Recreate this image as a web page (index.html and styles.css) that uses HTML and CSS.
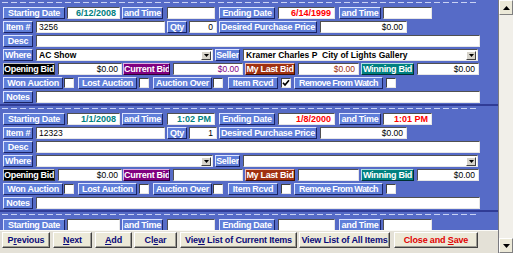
FILE: index.html
```html
<!DOCTYPE html>
<html>
<head>
<meta charset="utf-8">
<title>Auction Watch</title>
<link rel="stylesheet" href="styles.css">
</head>
<body>
<div class="window">
  <div class="main">
    <div class="records">

      <div class="record">
        <div class="dash"></div>
        <div class="rows">
          <div class="row">
            <div class="lbl w62">Starting Date</div>
            <div class="fld w53 ml2 r date teal">6/12/2008</div>
            <div class="lbl w41 ml2">and Time</div>
            <div class="fld w48 ml4 r date teal"></div>
            <div class="lbl w56 ml4">Ending Date</div>
            <div class="fld w57 ml3 r date red">6/14/1999</div>
            <div class="lbl w42 ml4">and Time</div>
            <div class="fld w49 ml2 r date red"></div>
          </div>
          <div class="row">
            <div class="lbl w30">Item #</div>
            <div class="fld w129 ml3">3256</div>
            <div class="lbl w20 ml2">Qty</div>
            <div class="fld w28 ml2 r">0</div>
            <div class="lbl w98 ml2">Desired Purchase Price</div>
            <div class="fld w87 ml3 r">$0.00</div>
          </div>
          <div class="row">
            <div class="lbl w30">Desc</div>
            <div class="fld w444 ml3"></div>
          </div>
          <div class="row">
            <div class="lbl w30">Where</div>
            <div class="fld combo w177 ml3"><span class="ctext b">AC Show</span><span class="drop"><svg width="5" height="3" viewBox="0 0 5 3"><path d="M0 0H5L2.5 3Z"/></svg></span></div>
            <div class="lbl w25 ml2">Seller</div>
            <div class="fld combo w235 ml3"><span class="ctext b"><span class="col1">Kramer Charles P</span>City of Lights Gallery</span><span class="drop"><svg width="5" height="3" viewBox="0 0 5 3"><path d="M0 0H5L2.5 3Z"/></svg></span></div>
          </div>
          <div class="row">
            <div class="lbl w52 black">Opening Bid</div>
            <div class="fld w64 ml3 r">$0.00</div>
            <div class="lbl w47 ml1 purple">Current Bid</div>
            <div class="fld w70 ml3 r t-purple">$0.00</div>
            <div class="lbl w50 ml2 brown">My Last Bid</div>
            <div class="fld w61 ml3 r t-brown">$0.00</div>
            <div class="lbl w53 ml2 teal-bg">Winning Bid</div>
            <div class="fld w62 ml3 r">$0.00</div>
          </div>
          <div class="row">
            <div class="lbl w60">Won Auction</div>
            <div class="cb ml1"></div>
            <div class="lbl w59 ml4">Lost Auction</div>
            <div class="cb ml2"></div>
            <div class="lbl w59 ml4">Auction Over</div>
            <div class="cb ml1"></div>
            <div class="lbl w50 ml5">Item Rcvd</div>
            <div class="cb ml3"><svg width="8" height="8" viewBox="0 0 8 8"><path d="M1 3.8L3 6L7 1.3" fill="none" stroke="#000" stroke-width="1.7"/></svg></div>
            <div class="lbl w89 ml3 tight">Remove From Watch</div>
            <div class="cb ml3"></div>
          </div>
          <div class="row">
            <div class="lbl w30">Notes</div>
            <div class="fld w444 ml3"></div>
          </div>
        </div>
      </div>

      <div class="record">
        <div class="dash"></div>
        <div class="rows">
          <div class="row">
            <div class="lbl w62">Starting Date</div>
            <div class="fld w53 ml2 r date teal">1/1/2008</div>
            <div class="lbl w41 ml2">and Time</div>
            <div class="fld w48 ml4 r date teal">1:02 PM</div>
            <div class="lbl w56 ml4">Ending Date</div>
            <div class="fld w57 ml3 r date red">1/8/2000</div>
            <div class="lbl w42 ml4">and Time</div>
            <div class="fld w49 ml2 r date red">1:01 PM</div>
          </div>
          <div class="row">
            <div class="lbl w30">Item #</div>
            <div class="fld w129 ml3">12323</div>
            <div class="lbl w20 ml2">Qty</div>
            <div class="fld w28 ml2 r">1</div>
            <div class="lbl w98 ml2">Desired Purchase Price</div>
            <div class="fld w87 ml3 r">$0.00</div>
          </div>
          <div class="row">
            <div class="lbl w30">Desc</div>
            <div class="fld w444 ml3"></div>
          </div>
          <div class="row">
            <div class="lbl w30">Where</div>
            <div class="fld combo w177 ml3"><span class="ctext b"></span><span class="drop"><svg width="5" height="3" viewBox="0 0 5 3"><path d="M0 0H5L2.5 3Z"/></svg></span></div>
            <div class="lbl w25 ml2">Seller</div>
            <div class="fld combo w235 ml3"><span class="ctext b"></span><span class="drop"><svg width="5" height="3" viewBox="0 0 5 3"><path d="M0 0H5L2.5 3Z"/></svg></span></div>
          </div>
          <div class="row">
            <div class="lbl w52 black">Opening Bid</div>
            <div class="fld w64 ml3 r">$0.00</div>
            <div class="lbl w47 ml1 purple">Current Bid</div>
            <div class="fld w70 ml3 r t-purple"></div>
            <div class="lbl w50 ml2 brown">My Last Bid</div>
            <div class="fld w61 ml3 r t-brown"></div>
            <div class="lbl w53 ml2 teal-bg">Winning Bid</div>
            <div class="fld w62 ml3 r">$0.00</div>
          </div>
          <div class="row">
            <div class="lbl w60">Won Auction</div>
            <div class="cb ml1"></div>
            <div class="lbl w59 ml4">Lost Auction</div>
            <div class="cb ml2"></div>
            <div class="lbl w59 ml4">Auction Over</div>
            <div class="cb ml1"></div>
            <div class="lbl w50 ml5">Item Rcvd</div>
            <div class="cb ml3"></div>
            <div class="lbl w89 ml3 tight">Remove From Watch</div>
            <div class="cb ml3"></div>
          </div>
          <div class="row">
            <div class="lbl w30">Notes</div>
            <div class="fld w444 ml3"></div>
          </div>
        </div>
      </div>

      <div class="record">
        <div class="dash"></div>
        <div class="rows">
          <div class="row">
            <div class="lbl w62">Starting Date</div>
            <div class="fld w53 ml2 r date teal"></div>
            <div class="lbl w41 ml2">and Time</div>
            <div class="fld w48 ml4 r date teal"></div>
            <div class="lbl w56 ml4">Ending Date</div>
            <div class="fld w57 ml3 r date red"></div>
            <div class="lbl w42 ml4">and Time</div>
            <div class="fld w49 ml2 r date red"></div>
          </div>
        </div>
      </div>

    </div>
    <div class="bar">
      <div class="btn w48">P<u>r</u>evious</div>
      <div class="btn w39 ml3"><u>N</u>ext</div>
      <div class="btn w37 ml3"><u>A</u>dd</div>
      <div class="btn w43 ml2">Cl<u>e</u>ar</div>
      <div class="btn w117 ml3">Vie<u>w</u> List of Current Items</div>
      <div class="btn w91 ml2">View List of All Items</div>
      <div class="btn w84 ml4 close">Close and <u>S</u>ave</div>
    </div>
  </div>
  <div class="scroll">
    <div class="sbtn"><svg width="7" height="4" viewBox="0 0 7 4"><path d="M0 4H7L3.5 0Z"/></svg></div>
    <div class="track"></div>
    <div class="sbtn"><svg width="7" height="4" viewBox="0 0 7 4"><path d="M0 0H7L3.5 4Z"/></svg></div>
  </div>
</div>
</body>
</html>
```

FILE: styles.css
```css
html, body {
  margin: 0;
  padding: 0;
}
body {
  width: 513px;
  height: 253px;
  overflow: hidden;
  font-family: "Liberation Sans", Arial, sans-serif;
  background: #e4e1d7;
}
.window {
  display: flex;
  width: 513px;
  height: 253px;
}
.main {
  width: 498px;
  display: flex;
  flex-direction: column;
}
.records {
  height: 230px;
  overflow: hidden;
  background: #566bc7;
}
.record {
  height: 106px;
  box-sizing: border-box;
  padding-top: 2px;
  padding-bottom: 1px;
  border-bottom: 2px solid #303c96;
}
.dash {
  height: 1px;
  margin: 0 21px 4px 2px;
  background: repeating-linear-gradient(90deg, #c9d2f4 0 6px, transparent 6px 9px);
}
.rows {
  display: flex;
  flex-direction: column;
  gap: 2px;
  padding-left: 3px;
}
.row {
  display: flex;
  align-items: center;
  height: 12px;
}
.lbl {
  box-sizing: border-box;
  height: 12px;
  border: 1px solid;
  border-color: #dde5ff #1b2463 #1b2463 #dde5ff;
  background: #5f7ed9;
  color: #fff;
  font-weight: bold;
  font-size: 9px;
  line-height: 10px;
  letter-spacing: -0.3px;
  text-align: center;
  white-space: nowrap;
  overflow: hidden;
}
.lbl.tight { letter-spacing: -0.6px; }
.lbl.black { background: #000; border-color: #c8c8c8 #303030 #303030 #c8c8c8; }
.lbl.purple { background: #800080; border-color: #e0b0e0 #300030 #300030 #e0b0e0; }
.lbl.brown { background: #a03010; border-color: #f0c0b0 #401000 #401000 #f0c0b0; }
.lbl.teal-bg { background: #008080; border-color: #b0e0e0 #003030 #003030 #b0e0e0; }

.fld {
  box-sizing: border-box;
  height: 12px;
  background: #fff;
  border: 1px solid;
  border-color: #505050 #e6e6e6 #e6e6e6 #505050;
  color: #000;
  font-size: 8.5px;
  line-height: 10px;
  padding: 0 2px;
  white-space: nowrap;
  overflow: hidden;
}
.r { text-align: right; padding-right: 3px; }
.b { font-weight: bold; }
.date { font-weight: bold; font-size: 9px; }
.teal { color: #008080; }
.red { color: #ff0000; }
.t-purple { color: #800080; }
.t-brown { color: #a03010; }

.combo {
  display: flex;
  align-items: center;
  padding-right: 1px;
}
.ctext { flex: 1; overflow: hidden; }
.col1 { display: inline-block; width: 76px; }
.drop {
  box-sizing: border-box;
  width: 10px;
  height: 9px;
  background: #d6d3ca;
  border: 1px solid;
  border-color: #fff #404040 #404040 #fff;
  display: flex;
  align-items: center;
  justify-content: center;
}
.drop svg { display: block; }

.cb {
  box-sizing: border-box;
  width: 10px;
  height: 10px;
  background: #fff;
  border: 1px solid;
  border-color: #404040 #e6e6e6 #e6e6e6 #404040;
  display: flex;
  align-items: center;
  justify-content: center;
}
.cb svg { display: block; }

.bar {
  height: 23px;
  box-sizing: border-box;
  background: #e4e1d7;
  border-top: 1px solid #fbfaf6;
  display: flex;
  align-items: flex-start;
  padding: 1px 0 0 2px;
}
.btn {
  box-sizing: border-box;
  height: 16px;
  border: 1px solid;
  border-color: #fff #404040 #404040 #fff;
  box-shadow: inset -1px -1px #9c9a92;
  background: #ece9d8;
  color: #0a0a78;
  font-weight: bold;
  font-size: 9px;
  line-height: 14px;
  text-align: center;
  white-space: nowrap;
  letter-spacing: -0.15px;
}
.btn.close { color: #e00000; }

.scroll {
  width: 15px;
  box-sizing: border-box;
  border-left: 1px solid #7a7a80;
  display: flex;
  flex-direction: column;
  background: #efede6;
}
.sbtn {
  box-sizing: border-box;
  height: 15px;
  background: #ece9d8;
  border: 1px solid;
  border-color: #fff #808080 #808080 #fff;
  display: flex;
  align-items: center;
  justify-content: center;
}
.sbtn svg { display: block; }
.track { flex: 1; background: #f1efe9; }

.ml1 { margin-left: 1px; }
.ml2 { margin-left: 2px; }
.ml3 { margin-left: 3px; }
.ml4 { margin-left: 4px; }
.ml5 { margin-left: 5px; }

.w20 { width: 20px; }
.w25 { width: 25px; }
.w28 { width: 28px; }
.w30 { width: 30px; }
.w37 { width: 37px; }
.w39 { width: 39px; }
.w41 { width: 41px; }
.w42 { width: 42px; }
.w43 { width: 43px; }
.w47 { width: 47px; }
.w48 { width: 48px; }
.w49 { width: 49px; }
.w50 { width: 50px; }
.w52 { width: 52px; }
.w53 { width: 53px; }
.w56 { width: 56px; }
.w57 { width: 57px; }
.w59 { width: 59px; }
.w60 { width: 60px; }
.w61 { width: 61px; }
.w62 { width: 62px; }
.w64 { width: 64px; }
.w70 { width: 70px; }
.w84 { width: 84px; }
.w87 { width: 87px; }
.w89 { width: 89px; }
.w91 { width: 91px; }
.w98 { width: 98px; }
.w117 { width: 117px; }
.w129 { width: 129px; }
.w177 { width: 177px; }
.w235 { width: 235px; }
.w444 { width: 444px; }
```
